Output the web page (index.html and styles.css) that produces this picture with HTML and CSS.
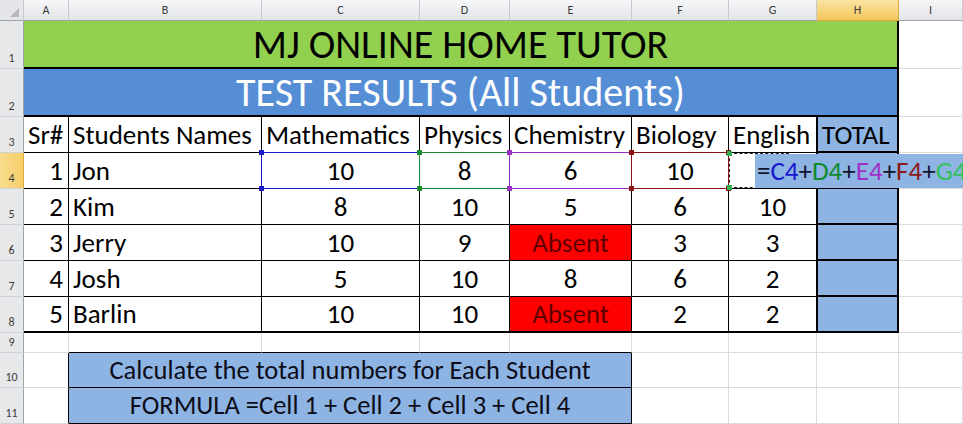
FILE: index.html
```html
<!DOCTYPE html>
<html>
<head>
<meta charset="utf-8">
<link rel="stylesheet" href="styles.css">
</head>
<body>
<div class="sheet">
  <div class="ch corner"><svg width="24" height="21" viewBox="0 0 24 21"><polygon points="19,8 19,17 10,17" fill="#b8b8b8"/></svg></div>
  <div class="ch">A</div>
  <div class="ch">B</div>
  <div class="ch">C</div>
  <div class="ch">D</div>
  <div class="ch">E</div>
  <div class="ch">F</div>
  <div class="ch">G</div>
  <div class="ch sel">H</div>
  <div class="ch">I</div>

  <div class="rh">1</div>
  <div class="c title green">MJ ONLINE HOME TUTOR</div>
  <div class="c"></div>

  <div class="rh">2</div>
  <div class="c title blue">TEST RESULTS (All Students)</div>
  <div class="c"></div>

  <div class="rh">3</div>
  <div class="c t l">Sr#</div>
  <div class="c t l">Students Names</div>
  <div class="c t l">Mathematics</div>
  <div class="c t l">Physics</div>
  <div class="c t l">Chemistry</div>
  <div class="c t l">Biology</div>
  <div class="c t l">English</div>
  <div class="c t tot l">TOTAL</div>
  <div class="c"></div>

  <div class="rh rsel">4</div>
  <div class="c t r">1</div>
  <div class="c t l">Jon</div>
  <div class="c t m pos">10<span class="rf rf-c"><i class="tl"></i><i class="tr"></i><i class="bl"></i><i class="br"></i></span></div>
  <div class="c t m pos">8<span class="rf rf-d"><i class="tl"></i><i class="tr"></i><i class="bl"></i><i class="br"></i></span></div>
  <div class="c t m pos">6<span class="rf rf-e"><i class="tl"></i><i class="tr"></i><i class="bl"></i><i class="br"></i></span></div>
  <div class="c t m pos">10<span class="rf rf-f"><i class="tl"></i><i class="tr"></i><i class="bl"></i><i class="br"></i></span></div>
  <div class="c t pos"><span class="ants"><i class="gtl"></i><i class="gbl"></i></span></div>
  <div class="c t tot pos"><span class="formula"><b class="k">=</b><b class="fc">C4</b><b class="k">+</b><b class="fd">D4</b><b class="k">+</b><b class="fe">E4</b><b class="k">+</b><b class="ff">F4</b><b class="k">+</b><b class="fg">G4</b></span></div>
  <div class="c"></div>

  <div class="rh">5</div>
  <div class="c t r">2</div>
  <div class="c t l">Kim</div>
  <div class="c t m">8</div>
  <div class="c t m">10</div>
  <div class="c t m">5</div>
  <div class="c t m">6</div>
  <div class="c t m">10</div>
  <div class="c t tot"></div>
  <div class="c"></div>

  <div class="rh">6</div>
  <div class="c t r">3</div>
  <div class="c t l">Jerry</div>
  <div class="c t m">10</div>
  <div class="c t m">9</div>
  <div class="c t m absent">Absent</div>
  <div class="c t m">3</div>
  <div class="c t m">3</div>
  <div class="c t tot"></div>
  <div class="c"></div>

  <div class="rh">7</div>
  <div class="c t r">4</div>
  <div class="c t l">Josh</div>
  <div class="c t m">5</div>
  <div class="c t m">10</div>
  <div class="c t m">8</div>
  <div class="c t m">6</div>
  <div class="c t m">2</div>
  <div class="c t tot"></div>
  <div class="c"></div>

  <div class="rh">8</div>
  <div class="c t last r">5</div>
  <div class="c t last l">Barlin</div>
  <div class="c t last m">10</div>
  <div class="c t last m">10</div>
  <div class="c t last m absent">Absent</div>
  <div class="c t last m">2</div>
  <div class="c t last m">2</div>
  <div class="c t last tot"></div>
  <div class="c"></div>

  <div class="rh">9</div>
  <div class="c"></div>
  <div class="c bb"></div>
  <div class="c bb"></div>
  <div class="c bb"></div>
  <div class="c bb"></div>
  <div class="c"></div>
  <div class="c"></div>
  <div class="c"></div>
  <div class="c"></div>

  <div class="rh">10</div>
  <div class="c br"></div>
  <div class="c note">Calculate the total numbers for Each Student</div>
  <div class="c"></div>
  <div class="c"></div>
  <div class="c"></div>
  <div class="c"></div>

  <div class="rh">11</div>
  <div class="c br"></div>
  <div class="c note">FORMULA =Cell 1 + Cell 2 + Cell 3 + Cell 4</div>
  <div class="c"></div>
  <div class="c"></div>
  <div class="c"></div>
  <div class="c"></div>
</div>
</body>
</html>
```

FILE: styles.css
```css
html, body {
  margin: 0;
  padding: 0;
  background: #ffffff;
  overflow: hidden;
}

.sheet {
  display: grid;
  grid-template-columns: 24px 45px 193px 158px 90px 122px 97px 88px 82px 64px;
  grid-template-rows: 21px 48px 48px 36px 36px 36px 36px 36px 36px 20px 35px 36px;
  width: 963px;
  height: 424px;
  font-family: Carlito, Lato, "Liberation Sans", sans-serif;
  font-size: 27px;
  color: #000;
}

.sheet > div {
  box-sizing: border-box;
  white-space: nowrap;
}

/* column headers */
.ch {
  background: linear-gradient(#f6f7f9, #e2e4e7);
  border-right: 1px solid #c5c8cc;
  border-bottom: 1px solid #9ea3a8;
  font-size: 12px;
  color: #3b3b3b;
  text-align: center;
  line-height: 20px;
}
.ch.corner {
  background: #e4e6e9;
}
.ch.corner svg {
  display: block;
}
.ch.sel {
  background: linear-gradient(#fbe3a3, #f4c75c);
  border-right: 1px solid #d9a83f;
  border-bottom: 1px solid #d9a83f;
}

/* row headers */
.rh {
  background: #e7e8ea;
  border-right: 1px solid #9ea3a8;
  border-bottom: 1px solid #cfd2d6;
  font-size: 12px;
  color: #3b3b3b;
  display: flex;
  align-items: flex-end;
  justify-content: center;
  padding-bottom: 3px;
}
.rh.rsel {
  background: linear-gradient(90deg, #f9dc8e, #f6cd68);
  border-right-color: #d9a83f;
}

/* cells */
.c {
  border-right: 1px solid #dcdcdc;
  border-bottom: 1px solid #dcdcdc;
  line-height: 35px;
  overflow: hidden;
}

.title {
  grid-column: span 8;
  text-align: center;
  font-size: 40px;
  line-height: 46px;
  padding-top: 1px;
  overflow: visible;
  border-right: 2px solid #000;
  border-bottom: 2px solid #000;
}
.green {
  background: #92d050;
  color: #000;
}
.blue {
  background: #558ed5;
  color: #fff;
}

.t {
  border-right-color: #000;
  border-bottom-color: #000;
  background: #fff;
}
.t.last {
  border-bottom: 2px solid #000;
  line-height: 34px;
}
.tot {
  background: #8db4e2;
  border-right: 2px solid #000;
  border-bottom: 2px solid #000;
  border-left: 1px solid #000;
}
.l {
  padding-left: 4px;
}
.r {
  text-align: right;
  padding-right: 5px;
}
.m {
  text-align: center;
}
.absent {
  background: #ff0000;
  color: #5e0000;
}

.pos {
  position: relative;
  overflow: visible;
}

/* range finder borders */
.rf {
  position: absolute;
  left: -1px;
  top: -1px;
  right: -1px;
  bottom: -1px;
  border: 1px solid currentColor;
}
.rf i {
  position: absolute;
  width: 5px;
  height: 5px;
  background: currentColor;
}
.rf .tl, .ants .gtl { left: -3px; top: -3px; }
.rf .tr { right: -3px; top: -3px; }
.rf .bl, .ants .gbl { left: -3px; bottom: -3px; }
.rf .br { right: -3px; bottom: -3px; }
.rf-c { color: #1a1ac8; }
.rf-d { color: #1c8a2e; }
.rf-e { color: #9b30c4; }
.rf-f { color: #8a1414; }

.ants {
  position: absolute;
  left: 0;
  top: 0;
  width: 60px;
  height: 35px;
  box-sizing: border-box;
  border: 1px dashed #1a1a1a;
  border-right: none;
}
.ants i {
  position: absolute;
  width: 5px;
  height: 5px;
  background: #2fb04f;
}

.formula {
  position: absolute;
  left: -63px;
  top: 1px;
  width: 240px;
  height: 34px;
  line-height: 34px;
  background: #8db4e2;
  padding-left: 2px;
  box-sizing: border-box;
  z-index: 2;
}
.formula b {
  font-weight: normal;
}
.formula .k { color: #141430; }
.formula .fc { color: #1717cf; }
.formula .fd { color: #0f8a2e; }
.formula .fe { color: #a030c8; }
.formula .ff { color: #8b1a1a; }
.formula .fg { color: #33c060; }

.bb {
  border-bottom-color: #000;
}
.br {
  border-right-color: #000;
}

.note {
  grid-column: span 4;
  background: #8db4e2;
  border-right-color: #000;
  border-bottom-color: #000;
  text-align: center;
  font-size: 26.5px;
  line-height: 34px;
  color: #0d0d1a;
}
```
